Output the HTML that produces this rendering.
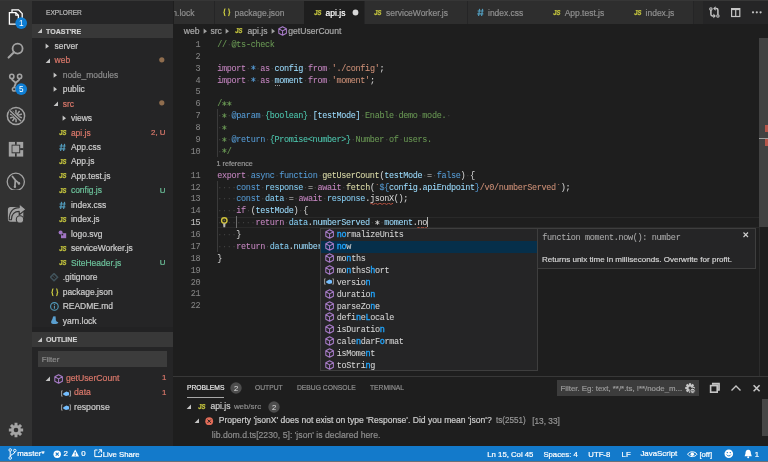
<!DOCTYPE html>
<html><head><meta charset="utf-8"><style>
html,body{margin:0;padding:0;background:#1e1e1e;overflow:hidden}
#root{position:relative;width:768px;height:462px;overflow:hidden;font-family:"Liberation Sans",sans-serif;will-change:transform}
#root>div{position:absolute;white-space:nowrap;-webkit-text-stroke:0.2px currentColor}
</style></head><body><div id="root">
<div style="left:0.00px;top:0.00px;width:768.00px;height:462.00px;background:#1e1e1e;"></div>
<div style="left:0.00px;top:0.00px;width:32.00px;height:446.00px;background:#323232;"></div>
<div style="left:32.00px;top:0.00px;width:141.20px;height:446.00px;background:#252526;"></div>
<div style="left:173.50px;top:0.00px;width:594.50px;height:24.20px;background:#252526;"></div>
<div style="left:0.00px;top:0.00px;width:768.00px;height:1.20px;background:#363636;"></div>
<div style="left:0.00px;top:445.70px;width:768.00px;height:15.00px;background:#137acb;"></div>
<div style="left:0.00px;top:460.60px;width:768.00px;height:1.40px;background:#6b7076;"></div>
<svg style="position:absolute;left:7.00px;top:8.00px;" width="20" height="20" viewBox="0 0 20 20"><path d="M2.4 4.7 L8.8 4.7 L11.4 7.3 L11.4 16.2 L2.4 16.2 Z" fill="none" stroke="#fff" stroke-width="1.3"/><path d="M5 4.7 V1.9 H11.6 L15.2 5.5 V13" fill="none" stroke="#fff" stroke-width="1.3"/><path d="M8.8 4.7 V7.3 H11.4" fill="none" stroke="#fff" stroke-width="1.1"/></svg>
<svg style="position:absolute;left:15.30px;top:16.80px;" width="13" height="13" viewBox="0 0 13 13"><circle cx="6.2" cy="6.1" r="5.9" fill="#0e7ed4"/><text x="6.2" y="9.0" text-anchor="middle" font-family="Liberation Sans" font-size="8.2" fill="#fff">1</text></svg>
<svg style="position:absolute;left:5.30px;top:38.60px;" width="20" height="22" viewBox="0 0 20 22"><circle cx="12.6" cy="9.6" r="5.0" fill="none" stroke="#a3a3a3" stroke-width="1.8"/><path d="M9 13.3 L3.6 18.6" stroke="#a3a3a3" stroke-width="2.1" stroke-linecap="round"/></svg>
<svg style="position:absolute;left:6.00px;top:70.00px;" width="20" height="24" viewBox="0 0 20 24"><circle cx="5.8" cy="6.4" r="2.1" fill="none" stroke="#a3a3a3" stroke-width="1.6"/><circle cx="13.6" cy="6.4" r="2.1" fill="none" stroke="#a3a3a3" stroke-width="1.6"/><path d="M5.8 8.5 C5.8 11.2 9.6 11.4 9.6 13.6 M13.6 8.5 C13.6 11.2 9.6 11.4 9.6 13.6 C9.6 15 8.4 15.6 8.4 17.2" fill="none" stroke="#a3a3a3" stroke-width="1.9"/><circle cx="8.2" cy="19.2" r="1.8" fill="none" stroke="#a3a3a3" stroke-width="1.5"/></svg>
<svg style="position:absolute;left:15.30px;top:82.80px;" width="13" height="13" viewBox="0 0 13 13"><circle cx="6.2" cy="6.1" r="5.9" fill="#0e7ed4"/><text x="6.2" y="9.0" text-anchor="middle" font-family="Liberation Sans" font-size="8.2" fill="#fff">5</text></svg>
<svg style="position:absolute;left:5.80px;top:106.10px;" width="20" height="20" viewBox="0 0 20 20"><circle cx="10" cy="10" r="8.6" fill="none" stroke="#a3a3a3" stroke-width="1.5"/><path d="M11.91 10.59 L15.92 11.83" stroke="#a3a3a3" stroke-width="1.5"/><path d="M11.20 11.60 L13.71 14.96" stroke="#a3a3a3" stroke-width="1.5"/><path d="M10.03 12.00 L10.09 16.20" stroke="#a3a3a3" stroke-width="1.5"/><path d="M8.85 11.63 L6.43 15.07" stroke="#a3a3a3" stroke-width="1.5"/><path d="M8.11 10.64 L4.13 12.00" stroke="#a3a3a3" stroke-width="1.5"/><path d="M8.09 9.41 L4.08 8.17" stroke="#a3a3a3" stroke-width="1.5"/><path d="M8.80 8.40 L6.29 5.04" stroke="#a3a3a3" stroke-width="1.5"/><path d="M9.97 8.00 L9.91 3.80" stroke="#a3a3a3" stroke-width="1.5"/><path d="M11.15 8.37 L13.57 4.93" stroke="#a3a3a3" stroke-width="1.5"/><path d="M11.89 9.36 L15.87 8.00" stroke="#a3a3a3" stroke-width="1.5"/><circle cx="10" cy="10.4" r="3" fill="#a3a3a3"/><path d="M3.8 4.4 L15.1 15.3" stroke="#323232" stroke-width="3"/><path d="M3.8 4.4 L15.1 15.3" stroke="#a3a3a3" stroke-width="1.4"/></svg>
<svg style="position:absolute;left:7.00px;top:140.00px;" width="18" height="18" viewBox="0 0 18 18"><rect x="1.8" y="1.9" width="14.4" height="14.7" fill="#a3a3a3"/><rect x="4.6" y="4.7" width="8.6" height="8.6" fill="#323232"/><rect x="5.45" y="5.6" width="6.75" height="6.7" fill="#a3a3a3"/><rect x="8" y="1.5" width="1.7" height="3.3" fill="#323232"/><rect x="8" y="13.2" width="1.7" height="3.6" fill="#323232"/><rect x="13.1" y="8.1" width="3.5" height="2" fill="#323232"/></svg>
<svg style="position:absolute;left:6.00px;top:170.00px;" width="20" height="20" viewBox="0 0 20 20"><circle cx="9.8" cy="11.8" r="8.6" fill="none" stroke="#a3a3a3" stroke-width="1.3"/><path d="M6.45 6.5 L9.3 10.1 L8.9 16.6 M9.4 10.3 L12.9 13.2" fill="none" stroke="#a3a3a3" stroke-width="1.7" stroke-linecap="round"/><circle cx="12.9" cy="13.4" r="1.3" fill="#a3a3a3"/><circle cx="8.9" cy="16.8" r="1.2" fill="#a3a3a3"/></svg>
<svg style="position:absolute;left:4.00px;top:198.00px;" width="26" height="28" viewBox="0 0 26 28"><rect x="3.9" y="9.1" width="15.4" height="14.6" rx="2.6" fill="#a3a3a3"/><path d="M7.4 21.8 C7.4 16 10.5 13.4 15.2 13.4 L15.2 16.8 L22 11.4 L15.2 5.8 L15.2 9.6 C9.2 9.6 5.2 13.6 5.2 21.8 Z" fill="#a3a3a3" stroke="#323232" stroke-width="1.1" stroke-linejoin="round"/><circle cx="16" cy="21.4" r="3.7" fill="#a3a3a3" stroke="#323232" stroke-width="1.1"/></svg>
<svg style="position:absolute;left:6.00px;top:419.50px;" width="20" height="20" viewBox="0 0 20 20"><path d="M17.15 8.55 L17.15 11.45 L14.78 11.48 L14.42 12.33 L16.08 14.03 L14.03 16.08 L12.33 14.42 L11.48 14.78 L11.45 17.15 L8.55 17.15 L8.52 14.78 L7.67 14.42 L5.97 16.08 L3.92 14.03 L5.58 12.33 L5.22 11.48 L2.85 11.45 L2.85 8.55 L5.22 8.52 L5.58 7.67 L3.92 5.97 L5.97 3.92 L7.67 5.58 L8.52 5.22 L8.55 2.85 L11.45 2.85 L11.48 5.22 L12.33 5.58 L14.03 3.92 L16.08 5.97 L14.42 7.67 L14.78 8.52Z" fill="#a3a3a3"/><circle cx="10" cy="10" r="2.3" fill="#323232"/></svg>
<div style="left:45.80px;top:7.93px;line-height:10.95px;font-family:'Liberation Sans', sans-serif;font-size:7.3px;color:#bbbbbb;font-weight:400;transform:scaleX(0.9);transform-origin:0 0">EXPLORER</div>
<div style="left:32.00px;top:23.70px;width:141.20px;height:14.60px;background:#383838;"></div>
<svg style="position:absolute;left:36.80px;top:28.40px;" width="6" height="6" viewBox="0 0 6 6"><path d="M5 0.6 L5 5 L0.6 5 Z" fill="#c5c5c5"/></svg>
<div style="left:45.80px;top:25.60px;line-height:11.40px;font-family:'Liberation Sans', sans-serif;font-size:7.6px;color:#d0d0d0;font-weight:700;transform:scaleX(0.925);transform-origin:0 0">TOAST&#x27;RE</div>
<svg style="position:absolute;left:45.30px;top:42.93px;" width="5" height="7" viewBox="0 0 5 7"><path d="M0.6 0.6 L4.0 3.2 L0.6 5.8 Z" fill="#c5c5c5"/></svg>
<div style="left:54.60px;top:39.77px;line-height:12.71px;font-family:'Liberation Sans', sans-serif;font-size:8.47px;color:#cccccc;font-weight:400;">server</div>
<svg style="position:absolute;left:44.60px;top:57.79px;" width="6" height="6" viewBox="0 0 6 6"><path d="M5 0.6 L5 5 L0.6 5 Z" fill="#c5c5c5"/></svg>
<div style="left:54.60px;top:54.23px;line-height:12.71px;font-family:'Liberation Sans', sans-serif;font-size:8.47px;color:#d8776a;font-weight:400;">web</div>
<svg style="position:absolute;left:158.50px;top:57.09px;" width="6" height="6" viewBox="0 0 6 6"><circle cx="2.8" cy="2.8" r="2.6" fill="#8f6d4e"/></svg>
<svg style="position:absolute;left:53.40px;top:71.85px;" width="5" height="7" viewBox="0 0 5 7"><path d="M0.6 0.6 L4.0 3.2 L0.6 5.8 Z" fill="#c5c5c5"/></svg>
<div style="left:62.70px;top:68.69px;line-height:12.71px;font-family:'Liberation Sans', sans-serif;font-size:8.47px;color:#8c8c8c;font-weight:400;">node_modules</div>
<svg style="position:absolute;left:53.40px;top:86.31px;" width="5" height="7" viewBox="0 0 5 7"><path d="M0.6 0.6 L4.0 3.2 L0.6 5.8 Z" fill="#c5c5c5"/></svg>
<div style="left:62.70px;top:83.16px;line-height:12.71px;font-family:'Liberation Sans', sans-serif;font-size:8.47px;color:#cccccc;font-weight:400;">public</div>
<svg style="position:absolute;left:52.70px;top:101.17px;" width="6" height="6" viewBox="0 0 6 6"><path d="M5 0.6 L5 5 L0.6 5 Z" fill="#c5c5c5"/></svg>
<div style="left:62.70px;top:97.62px;line-height:12.71px;font-family:'Liberation Sans', sans-serif;font-size:8.47px;color:#d8776a;font-weight:400;">src</div>
<svg style="position:absolute;left:158.50px;top:100.47px;" width="6" height="6" viewBox="0 0 6 6"><circle cx="2.8" cy="2.8" r="2.6" fill="#8f6d4e"/></svg>
<svg style="position:absolute;left:61.60px;top:115.23px;" width="5" height="7" viewBox="0 0 5 7"><path d="M0.6 0.6 L4.0 3.2 L0.6 5.8 Z" fill="#c5c5c5"/></svg>
<div style="left:70.90px;top:112.08px;line-height:12.71px;font-family:'Liberation Sans', sans-serif;font-size:8.47px;color:#cccccc;font-weight:400;">views</div>
<svg style="position:absolute;left:58.60px;top:128.89px;" width="9" height="8" viewBox="0 0 9 8"><text x="0.3" y="6.45" font-family="Liberation Sans" font-weight="700" font-style="italic" font-size="6.9" textLength="7.2" lengthAdjust="spacingAndGlyphs" fill="#c4c43e" stroke="#c4c43e" stroke-width="0.25">JS</text></svg>
<div style="left:70.90px;top:126.53px;line-height:12.71px;font-family:'Liberation Sans', sans-serif;font-size:8.47px;color:#d8776a;font-weight:400;">api.js</div>
<div style="right:602.5px;top:126.89px;line-height:12px;font-family:'Liberation Sans', sans-serif;font-size:7.9px;color:#d8776a">2, U</div>
<svg style="position:absolute;left:59.40px;top:143.15px;" width="8" height="9" viewBox="0 0 8 9"><path d="M2.6 0.8 L1.6 8 M5.6 0.8 L4.6 8 M0.6 3 H6.6 M0.3 5.8 H6.3" stroke="#519aba" stroke-width="1.2" fill="none"/></svg>
<div style="left:70.90px;top:141.00px;line-height:12.71px;font-family:'Liberation Sans', sans-serif;font-size:8.47px;color:#cccccc;font-weight:400;">App.css</div>
<svg style="position:absolute;left:58.60px;top:157.81px;" width="9" height="8" viewBox="0 0 9 8"><text x="0.3" y="6.45" font-family="Liberation Sans" font-weight="700" font-style="italic" font-size="6.9" textLength="7.2" lengthAdjust="spacingAndGlyphs" fill="#c4c43e" stroke="#c4c43e" stroke-width="0.25">JS</text></svg>
<div style="left:70.90px;top:155.46px;line-height:12.71px;font-family:'Liberation Sans', sans-serif;font-size:8.47px;color:#cccccc;font-weight:400;">App.js</div>
<svg style="position:absolute;left:58.60px;top:172.27px;" width="9" height="8" viewBox="0 0 9 8"><text x="0.3" y="6.45" font-family="Liberation Sans" font-weight="700" font-style="italic" font-size="6.9" textLength="7.2" lengthAdjust="spacingAndGlyphs" fill="#c4c43e" stroke="#c4c43e" stroke-width="0.25">JS</text></svg>
<div style="left:70.90px;top:169.92px;line-height:12.71px;font-family:'Liberation Sans', sans-serif;font-size:8.47px;color:#cccccc;font-weight:400;">App.test.js</div>
<svg style="position:absolute;left:58.60px;top:186.73px;" width="9" height="8" viewBox="0 0 9 8"><text x="0.3" y="6.45" font-family="Liberation Sans" font-weight="700" font-style="italic" font-size="6.9" textLength="7.2" lengthAdjust="spacingAndGlyphs" fill="#c4c43e" stroke="#c4c43e" stroke-width="0.25">JS</text></svg>
<div style="left:70.90px;top:184.38px;line-height:12.71px;font-family:'Liberation Sans', sans-serif;font-size:8.47px;color:#6cc09a;font-weight:400;">config.js</div>
<div style="right:602.5px;top:184.73px;line-height:12px;font-family:'Liberation Sans', sans-serif;font-size:7.9px;color:#6cc09a">U</div>
<svg style="position:absolute;left:59.40px;top:200.99px;" width="8" height="9" viewBox="0 0 8 9"><path d="M2.6 0.8 L1.6 8 M5.6 0.8 L4.6 8 M0.6 3 H6.6 M0.3 5.8 H6.3" stroke="#519aba" stroke-width="1.2" fill="none"/></svg>
<div style="left:70.90px;top:198.84px;line-height:12.71px;font-family:'Liberation Sans', sans-serif;font-size:8.47px;color:#cccccc;font-weight:400;">index.css</div>
<svg style="position:absolute;left:58.60px;top:215.65px;" width="9" height="8" viewBox="0 0 9 8"><text x="0.3" y="6.45" font-family="Liberation Sans" font-weight="700" font-style="italic" font-size="6.9" textLength="7.2" lengthAdjust="spacingAndGlyphs" fill="#c4c43e" stroke="#c4c43e" stroke-width="0.25">JS</text></svg>
<div style="left:70.90px;top:213.30px;line-height:12.71px;font-family:'Liberation Sans', sans-serif;font-size:8.47px;color:#cccccc;font-weight:400;">index.js</div>
<svg style="position:absolute;left:58.30px;top:229.81px;" width="9" height="9" viewBox="0 0 9 9"><circle cx="2.6" cy="2.6" r="2" fill="#a074c4"/><rect x="3" y="3.2" width="5.2" height="5" fill="#a074c4"/><rect x="3.6" y="3.8" width="1.6" height="1.6" fill="#252526"/></svg>
<div style="left:70.90px;top:227.76px;line-height:12.71px;font-family:'Liberation Sans', sans-serif;font-size:8.47px;color:#cccccc;font-weight:400;">logo.svg</div>
<svg style="position:absolute;left:58.60px;top:244.57px;" width="9" height="8" viewBox="0 0 9 8"><text x="0.3" y="6.45" font-family="Liberation Sans" font-weight="700" font-style="italic" font-size="6.9" textLength="7.2" lengthAdjust="spacingAndGlyphs" fill="#c4c43e" stroke="#c4c43e" stroke-width="0.25">JS</text></svg>
<div style="left:70.90px;top:242.22px;line-height:12.71px;font-family:'Liberation Sans', sans-serif;font-size:8.47px;color:#cccccc;font-weight:400;">serviceWorker.js</div>
<svg style="position:absolute;left:58.60px;top:259.03px;" width="9" height="8" viewBox="0 0 9 8"><text x="0.3" y="6.45" font-family="Liberation Sans" font-weight="700" font-style="italic" font-size="6.9" textLength="7.2" lengthAdjust="spacingAndGlyphs" fill="#c4c43e" stroke="#c4c43e" stroke-width="0.25">JS</text></svg>
<div style="left:70.90px;top:256.68px;line-height:12.71px;font-family:'Liberation Sans', sans-serif;font-size:8.47px;color:#6cc09a;font-weight:400;">SiteHeader.js</div>
<div style="right:602.5px;top:257.03px;line-height:12px;font-family:'Liberation Sans', sans-serif;font-size:7.9px;color:#6cc09a">U</div>
<svg style="position:absolute;left:50.40px;top:273.29px;" width="9" height="9" viewBox="0 0 9 9"><path d="M4 0.6 L7.6 4.2 L4 7.8 L0.4 4.2 Z" fill="none" stroke="#41535b" stroke-width="1.5"/><path d="M3 3.2 L4.5 4.7" stroke="#41535b" stroke-width="1"/></svg>
<div style="left:62.70px;top:271.13px;line-height:12.71px;font-family:'Liberation Sans', sans-serif;font-size:8.47px;color:#cccccc;font-weight:400;">.gitignore</div>
<svg style="position:absolute;left:50.50px;top:287.75px;" width="8" height="9" viewBox="0 0 8 9"><path d="M2.4 0.9 C1.2 0.9 1.5 2 1.4 3.2 C1.3 4 1 4.2 0.5 4.3 C1 4.4 1.3 4.6 1.4 5.4 C1.5 6.6 1.2 7.7 2.4 7.7 M5.2 0.9 C6.4 0.9 6.1 2 6.2 3.2 C6.3 4 6.6 4.2 7.1 4.3 C6.6 4.4 6.3 4.6 6.2 5.4 C6.1 6.6 6.4 7.7 5.2 7.7" fill="none" stroke="#cbcb41" stroke-width="1.2"/></svg>
<div style="left:62.70px;top:285.60px;line-height:12.71px;font-family:'Liberation Sans', sans-serif;font-size:8.47px;color:#cccccc;font-weight:400;">package.json</div>
<svg style="position:absolute;left:50.00px;top:302.01px;" width="9" height="9" viewBox="0 0 9 9"><circle cx="4.4" cy="4.4" r="3.8" fill="none" stroke="#519aba" stroke-width="1.1"/><rect x="3.9" y="3.8" width="1.1" height="2.9" fill="#519aba"/><rect x="3.9" y="2.1" width="1.1" height="1" fill="#519aba"/></svg>
<div style="left:62.70px;top:300.06px;line-height:12.71px;font-family:'Liberation Sans', sans-serif;font-size:8.47px;color:#cccccc;font-weight:400;">README.md</div>
<svg style="position:absolute;left:50.00px;top:315.37px;" width="10" height="10" viewBox="0 0 10 10"><path d="M3.2 1.8 L3.9 0.9 L4.6 1.6 L5.3 0.9 L5.6 2.2 C6 3.2 5.6 4.6 6 5.6 C6.4 6.6 7.6 7 8.4 7.4 C7.8 8.6 6.2 9 4.6 9 C2.6 9 1.2 8.6 1.1 7.4 C1 6 2.2 5 2.5 3.8 C2.7 2.9 2.8 2.3 3.2 1.8Z" fill="#5a9fcf"/></svg>
<div style="left:62.70px;top:314.51px;line-height:12.71px;font-family:'Liberation Sans', sans-serif;font-size:8.47px;color:#cccccc;font-weight:400;">yarn.lock</div>
<div style="left:32.00px;top:326.80px;width:141.20px;height:5.20px;background:#222223;"></div>
<div style="left:32.00px;top:332.00px;width:141.20px;height:14.80px;background:#383838;"></div>
<svg style="position:absolute;left:36.80px;top:336.60px;" width="6" height="6" viewBox="0 0 6 6"><path d="M5 0.6 L5 5 L0.6 5 Z" fill="#c5c5c5"/></svg>
<div style="left:45.50px;top:334.23px;line-height:11.55px;font-family:'Liberation Sans', sans-serif;font-size:7.7px;color:#d0d0d0;font-weight:700;transform:scaleX(0.925);transform-origin:0 0">OUTLINE</div>
<div style="left:38.30px;top:351.00px;width:128.90px;height:16.20px;background:#3c3c3c;"></div>
<div style="left:41.80px;top:354.07px;line-height:11.85px;font-family:'Liberation Sans', sans-serif;font-size:7.9px;color:#8d8d8d;font-weight:400;">Filter</div>
<svg style="position:absolute;left:45.20px;top:375.60px;" width="6" height="6" viewBox="0 0 6 6"><path d="M5 0.6 L5 5 L0.6 5 Z" fill="#c5c5c5"/></svg>
<svg style="position:absolute;left:53.60px;top:373.60px;" width="9.2" height="10" viewBox="0 0 9.2 10"><path d="M4.6 0.7 L8.4 2.8 L8.4 7.2 L4.6 9.3 L0.8 7.2 L0.8 2.8 Z M0.8 2.8 L4.6 4.9 L8.4 2.8 M4.6 4.9 L4.6 9.3" fill="none" stroke="#a87cc9" stroke-width="1.05" stroke-linejoin="round"/></svg>
<div style="left:65.90px;top:371.98px;line-height:13.05px;font-family:'Liberation Sans', sans-serif;font-size:8.7px;color:#d8776a;font-weight:400;">getUserCount</div>
<div style="left:162.00px;top:372.07px;line-height:11.85px;font-family:'Liberation Sans', sans-serif;font-size:7.9px;color:#d8776a;font-weight:400;">1</div>
<svg style="position:absolute;left:61.00px;top:389.50px;" width="10" height="7" viewBox="0 0 10 7"><path d="M1.6 0.8 H0.6 V6.2 H1.6 M8.4 0.8 H9.4 V6.2 H8.4" fill="none" stroke="#b8b8b8" stroke-width="0.8"/><path d="M2.3 3.2 L5.5 1.5 L8 2.6 L8 5.2 L5 6 L2.3 4.8 Z" fill="#75beff"/></svg>
<div style="left:74.00px;top:386.48px;line-height:13.05px;font-family:'Liberation Sans', sans-serif;font-size:8.7px;color:#d8776a;font-weight:400;">data</div>
<div style="left:162.00px;top:386.57px;line-height:11.85px;font-family:'Liberation Sans', sans-serif;font-size:7.9px;color:#d8776a;font-weight:400;">1</div>
<svg style="position:absolute;left:61.00px;top:404.20px;" width="10" height="7" viewBox="0 0 10 7"><path d="M1.6 0.8 H0.6 V6.2 H1.6 M8.4 0.8 H9.4 V6.2 H8.4" fill="none" stroke="#b8b8b8" stroke-width="0.8"/><path d="M2.3 3.2 L5.5 1.5 L8 2.6 L8 5.2 L5 6 L2.3 4.8 Z" fill="#75beff"/></svg>
<div style="left:74.00px;top:401.18px;line-height:13.05px;font-family:'Liberation Sans', sans-serif;font-size:8.7px;color:#cccccc;font-weight:400;">response</div>
<div style="left:173.50px;top:1.20px;width:40.50px;height:23.00px;background:#2e2e2e;"></div>
<div style="left:173.5px;top:6.5px;width:21px;height:13px;overflow:hidden"><div style="position:absolute;right:0;top:0.4px;line-height:12.7px;font-family:'Liberation Sans', sans-serif;font-size:8.47px;color:#8f8f8f;white-space:nowrap">yarn.lock</div></div>
<div style="left:214.50px;top:1.20px;width:89.80px;height:23.00px;background:#2e2e2e;"></div>
<svg style="position:absolute;left:222.60px;top:8.20px;" width="8" height="9" viewBox="0 0 8 9"><path d="M2.4 0.9 C1.2 0.9 1.5 2 1.4 3.2 C1.3 4 1 4.2 0.5 4.3 C1 4.4 1.3 4.6 1.4 5.4 C1.5 6.6 1.2 7.7 2.4 7.7 M5.2 0.9 C6.4 0.9 6.1 2 6.2 3.2 C6.3 4 6.6 4.2 7.1 4.3 C6.6 4.4 6.3 4.6 6.2 5.4 C6.1 6.6 6.4 7.7 5.2 7.7" fill="none" stroke="#cbcb41" stroke-width="1.2"/></svg>
<div style="left:234.60px;top:6.64px;line-height:12.71px;font-family:'Liberation Sans', sans-serif;font-size:8.47px;color:#8f8f8f;font-weight:400;">package.json</div>
<div style="left:304.30px;top:1.20px;width:59.70px;height:23.00px;background:#1e1e1e;"></div>
<svg style="position:absolute;left:313.90px;top:8.70px;" width="9" height="8" viewBox="0 0 9 8"><text x="0.3" y="6.45" font-family="Liberation Sans" font-weight="700" font-style="italic" font-size="6.9" textLength="7.2" lengthAdjust="spacingAndGlyphs" fill="#c4c43e" stroke="#c4c43e" stroke-width="0.25">JS</text></svg>
<div style="left:325.60px;top:6.64px;line-height:12.71px;font-family:'Liberation Sans', sans-serif;font-size:8.47px;color:#ffffff;font-weight:400;">api.js</div>
<svg style="position:absolute;left:351.50px;top:9.00px;" width="7" height="7" viewBox="0 0 7 7"><circle cx="3.5" cy="3.5" r="2.9" fill="#d8d8d8"/></svg>
<div style="left:364.60px;top:1.20px;width:102.40px;height:23.00px;background:#2e2e2e;"></div>
<svg style="position:absolute;left:373.70px;top:8.70px;" width="9" height="8" viewBox="0 0 9 8"><text x="0.3" y="6.45" font-family="Liberation Sans" font-weight="700" font-style="italic" font-size="6.9" textLength="7.2" lengthAdjust="spacingAndGlyphs" fill="#c4c43e" stroke="#c4c43e" stroke-width="0.25">JS</text></svg>
<div style="left:386.00px;top:6.64px;line-height:12.71px;font-family:'Liberation Sans', sans-serif;font-size:8.47px;color:#8f8f8f;font-weight:400;">serviceWorker.js</div>
<div style="left:467.50px;top:1.20px;width:76.00px;height:23.00px;background:#2e2e2e;"></div>
<svg style="position:absolute;left:477.00px;top:8.30px;" width="8" height="9" viewBox="0 0 8 9"><path d="M2.6 0.8 L1.6 8 M5.6 0.8 L4.6 8 M0.6 3 H6.6 M0.3 5.8 H6.3" stroke="#519aba" stroke-width="1.2" fill="none"/></svg>
<div style="left:488.00px;top:6.64px;line-height:12.71px;font-family:'Liberation Sans', sans-serif;font-size:8.47px;color:#8f8f8f;font-weight:400;">index.css</div>
<div style="left:544.20px;top:1.20px;width:79.50px;height:23.00px;background:#2e2e2e;"></div>
<svg style="position:absolute;left:552.70px;top:8.70px;" width="9" height="8" viewBox="0 0 9 8"><text x="0.3" y="6.45" font-family="Liberation Sans" font-weight="700" font-style="italic" font-size="6.9" textLength="7.2" lengthAdjust="spacingAndGlyphs" fill="#c4c43e" stroke="#c4c43e" stroke-width="0.25">JS</text></svg>
<div style="left:564.70px;top:6.64px;line-height:12.71px;font-family:'Liberation Sans', sans-serif;font-size:8.47px;color:#8f8f8f;font-weight:400;">App.test.js</div>
<div style="left:624.30px;top:1.20px;width:68.80px;height:23.00px;background:#2e2e2e;"></div>
<svg style="position:absolute;left:633.70px;top:8.70px;" width="9" height="8" viewBox="0 0 9 8"><text x="0.3" y="6.45" font-family="Liberation Sans" font-weight="700" font-style="italic" font-size="6.9" textLength="7.2" lengthAdjust="spacingAndGlyphs" fill="#c4c43e" stroke="#c4c43e" stroke-width="0.25">JS</text></svg>
<div style="left:645.60px;top:6.64px;line-height:12.71px;font-family:'Liberation Sans', sans-serif;font-size:8.47px;color:#8f8f8f;font-weight:400;">index.js</div>
<div style="left:693.50px;top:1.20px;width:9.50px;height:23.00px;background:#2a2a2a;"></div>
<svg style="position:absolute;left:706.00px;top:5.00px;" width="16" height="16" viewBox="0 0 16 16"><circle cx="4.9" cy="3.9" r="1.2" fill="none" stroke="#c5c5c5" stroke-width="1.1"/><path d="M4.9 5.1 V9.3 Q4.9 10.9 6.5 10.9 L7.6 10.9" fill="none" stroke="#c5c5c5" stroke-width="1.5"/><path d="M7.4 8.6 L9.9 10.9 L7.4 13.2 Z" fill="#c5c5c5"/><path d="M9.6 1.2 L7.1 3.5 L9.6 5.8 Z" fill="#c5c5c5"/><path d="M9.4 3.5 L10.4 3.5 Q11.9 3.5 11.9 5.1 V9.8" fill="none" stroke="#c5c5c5" stroke-width="1.5"/><circle cx="11.9" cy="11" r="1.2" fill="none" stroke="#c5c5c5" stroke-width="1.1"/></svg>
<svg style="position:absolute;left:729.00px;top:6.00px;" width="14" height="14" viewBox="0 0 14 14"><rect x="2.6" y="2.6" width="8.2" height="7.9" fill="none" stroke="#c5c5c5" stroke-width="1.2"/><rect x="2.6" y="2.6" width="8.2" height="1.5" fill="#c5c5c5"/><rect x="6.1" y="2.6" width="1.2" height="7.9" fill="#c5c5c5"/></svg>
<svg style="position:absolute;left:750.00px;top:9.00px;" width="14" height="7" viewBox="0 0 14 7"><circle cx="3" cy="3.3" r="1.1" fill="#c5c5c5"/><circle cx="6.8" cy="3.3" r="1.1" fill="#c5c5c5"/><circle cx="10.6" cy="3.3" r="1.1" fill="#c5c5c5"/></svg>
<div style="left:183.80px;top:25.15px;line-height:12.90px;font-family:'Liberation Sans', sans-serif;font-size:8.6px;color:#a9a9a9;font-weight:400;">web</div>
<svg style="position:absolute;left:203.00px;top:28.20px;" width="5" height="7" viewBox="0 0 5 7"><path d="M0.6 0.6 L4.0 3.2 L0.6 5.8 Z" fill="#a0a0a0"/></svg>
<div style="left:210.40px;top:25.15px;line-height:12.90px;font-family:'Liberation Sans', sans-serif;font-size:8.6px;color:#a9a9a9;font-weight:400;">src</div>
<svg style="position:absolute;left:225.30px;top:28.20px;" width="5" height="7" viewBox="0 0 5 7"><path d="M0.6 0.6 L4.0 3.2 L0.6 5.8 Z" fill="#a0a0a0"/></svg>
<svg style="position:absolute;left:235.30px;top:27.00px;" width="9" height="8" viewBox="0 0 9 8"><text x="0.3" y="6.45" font-family="Liberation Sans" font-weight="700" font-style="italic" font-size="6.9" textLength="7.2" lengthAdjust="spacingAndGlyphs" fill="#c4c43e" stroke="#c4c43e" stroke-width="0.25">JS</text></svg>
<div style="left:247.50px;top:25.15px;line-height:12.90px;font-family:'Liberation Sans', sans-serif;font-size:8.6px;color:#a9a9a9;font-weight:400;">api.js</div>
<svg style="position:absolute;left:270.50px;top:28.20px;" width="5" height="7" viewBox="0 0 5 7"><path d="M0.6 0.6 L4.0 3.2 L0.6 5.8 Z" fill="#a0a0a0"/></svg>
<svg style="position:absolute;left:277.60px;top:25.80px;" width="9.2" height="10" viewBox="0 0 9.2 10"><path d="M4.6 0.7 L8.4 2.8 L8.4 7.2 L4.6 9.3 L0.8 7.2 L0.8 2.8 Z M0.8 2.8 L4.6 4.9 L8.4 2.8 M4.6 4.9 L4.6 9.3" fill="none" stroke="#a87cc9" stroke-width="1.05" stroke-linejoin="round"/></svg>
<div style="left:288.30px;top:25.15px;line-height:12.90px;font-family:'Liberation Sans', sans-serif;font-size:8.6px;color:#a9a9a9;font-weight:400;">getUserCount</div>
<div style="left:217.25px;top:216.90px;width:541.50px;height:0.90px;background:#292929;"></div>
<div style="left:217.25px;top:226.80px;width:541.50px;height:0.90px;background:#292929;"></div>
<div style="left:217.25px;top:109.24px;width:0.90px;height:11.88px;background:#3a3a3a;"></div>
<div style="left:217.25px;top:121.12px;width:0.90px;height:11.88px;background:#3a3a3a;"></div>
<div style="left:217.25px;top:133.00px;width:0.90px;height:11.88px;background:#3a3a3a;"></div>
<div style="left:217.25px;top:144.88px;width:0.90px;height:11.88px;background:#3a3a3a;"></div>
<div style="left:217.25px;top:180.52px;width:0.90px;height:11.88px;background:#3a3a3a;"></div>
<div style="left:217.25px;top:192.40px;width:0.90px;height:11.88px;background:#3a3a3a;"></div>
<div style="left:217.25px;top:204.28px;width:0.90px;height:11.88px;background:#3a3a3a;"></div>
<div style="left:217.25px;top:216.16px;width:0.90px;height:11.88px;background:#3a3a3a;"></div>
<div style="left:217.25px;top:228.04px;width:0.90px;height:11.88px;background:#3a3a3a;"></div>
<div style="left:217.25px;top:239.92px;width:0.90px;height:11.88px;background:#3a3a3a;"></div>
<div style="left:236.01px;top:216.16px;width:0.90px;height:11.88px;background:#6e6e6e;"></div>
<div style="left:170px;width:30.23px;text-align:right;top:39.96px;line-height:11.88px;font-family:'Liberation Mono', monospace;font-size:8.5px;letter-spacing:-0.335px;-webkit-text-stroke:0.05px currentColor;color:#858585">1</div>
<div style="left:217.25px;top:39.96px;line-height:11.88px;font-family:'Liberation Mono', monospace;font-size:8.5px;letter-spacing:-0.335px;-webkit-text-stroke:0.05px currentColor;white-space:pre"><span style="color:#6a9955">//</span><span style="color:#424242">·</span><span style="color:#6a9955">@ts-check</span></div>
<div style="left:170px;width:30.23px;text-align:right;top:51.84px;line-height:11.88px;font-family:'Liberation Mono', monospace;font-size:8.5px;letter-spacing:-0.335px;-webkit-text-stroke:0.05px currentColor;color:#858585">2</div>
<div style="left:170px;width:30.23px;text-align:right;top:63.72px;line-height:11.88px;font-family:'Liberation Mono', monospace;font-size:8.5px;letter-spacing:-0.335px;-webkit-text-stroke:0.05px currentColor;color:#858585">3</div>
<div style="left:217.25px;top:63.72px;line-height:11.88px;font-family:'Liberation Mono', monospace;font-size:8.5px;letter-spacing:-0.335px;-webkit-text-stroke:0.05px currentColor;white-space:pre"><span style="color:#c586c0">import</span><span style="color:#424242">·</span><span style="display:inline-block;width:4.765px;height:11.88px;vertical-align:top;position:relative"><svg style="position:absolute;left:0;top:1.54px" width="5" height="5.2" viewBox="0 0 5 5.2"><path d="M2.4 0.3 V4.9 M0.4 1.45 L4.4 3.75 M0.4 3.75 L4.4 1.45" stroke="#569cd6" stroke-width="0.9"/></svg></span><span style="color:#424242">·</span><span style="color:#c586c0">as</span><span style="color:#424242">·</span><span style="color:#9cdcfe">config</span><span style="color:#424242">·</span><span style="color:#c586c0">from</span><span style="color:#424242">·</span><span style="color:#ce9178">&#x27;./config&#x27;</span><span style="color:#d4d4d4">;</span></div>
<div style="left:170px;width:30.23px;text-align:right;top:75.60px;line-height:11.88px;font-family:'Liberation Mono', monospace;font-size:8.5px;letter-spacing:-0.335px;-webkit-text-stroke:0.05px currentColor;color:#858585">4</div>
<div style="left:217.25px;top:75.60px;line-height:11.88px;font-family:'Liberation Mono', monospace;font-size:8.5px;letter-spacing:-0.335px;-webkit-text-stroke:0.05px currentColor;white-space:pre"><span style="color:#c586c0">import</span><span style="color:#424242">·</span><span style="display:inline-block;width:4.765px;height:11.88px;vertical-align:top;position:relative"><svg style="position:absolute;left:0;top:1.54px" width="5" height="5.2" viewBox="0 0 5 5.2"><path d="M2.4 0.3 V4.9 M0.4 1.45 L4.4 3.75 M0.4 3.75 L4.4 1.45" stroke="#569cd6" stroke-width="0.9"/></svg></span><span style="color:#424242">·</span><span style="color:#c586c0">as</span><span style="color:#424242">·</span><span style="color:#9cdcfe">moment</span><span style="color:#424242">·</span><span style="color:#c586c0">from</span><span style="color:#424242">·</span><span style="color:#ce9178">&#x27;moment&#x27;</span><span style="color:#d4d4d4">;</span></div>
<div style="left:170px;width:30.23px;text-align:right;top:87.48px;line-height:11.88px;font-family:'Liberation Mono', monospace;font-size:8.5px;letter-spacing:-0.335px;-webkit-text-stroke:0.05px currentColor;color:#858585">5</div>
<div style="left:170px;width:30.23px;text-align:right;top:99.36px;line-height:11.88px;font-family:'Liberation Mono', monospace;font-size:8.5px;letter-spacing:-0.335px;-webkit-text-stroke:0.05px currentColor;color:#858585">6</div>
<div style="left:217.25px;top:99.36px;line-height:11.88px;font-family:'Liberation Mono', monospace;font-size:8.5px;letter-spacing:-0.335px;-webkit-text-stroke:0.05px currentColor;white-space:pre"><span style="color:#6a9955">/</span><span style="display:inline-block;width:4.765px;height:11.88px;vertical-align:top;position:relative"><svg style="position:absolute;left:0;top:1.54px" width="5" height="5.2" viewBox="0 0 5 5.2"><path d="M2.4 0.3 V4.9 M0.4 1.45 L4.4 3.75 M0.4 3.75 L4.4 1.45" stroke="#6a9955" stroke-width="0.9"/></svg></span><span style="display:inline-block;width:4.765px;height:11.88px;vertical-align:top;position:relative"><svg style="position:absolute;left:0;top:1.54px" width="5" height="5.2" viewBox="0 0 5 5.2"><path d="M2.4 0.3 V4.9 M0.4 1.45 L4.4 3.75 M0.4 3.75 L4.4 1.45" stroke="#6a9955" stroke-width="0.9"/></svg></span></div>
<div style="left:170px;width:30.23px;text-align:right;top:111.24px;line-height:11.88px;font-family:'Liberation Mono', monospace;font-size:8.5px;letter-spacing:-0.335px;-webkit-text-stroke:0.05px currentColor;color:#858585">7</div>
<div style="left:217.25px;top:111.24px;line-height:11.88px;font-family:'Liberation Mono', monospace;font-size:8.5px;letter-spacing:-0.335px;-webkit-text-stroke:0.05px currentColor;white-space:pre"><span style="color:#424242">·</span><span style="display:inline-block;width:4.765px;height:11.88px;vertical-align:top;position:relative"><svg style="position:absolute;left:0;top:1.54px" width="5" height="5.2" viewBox="0 0 5 5.2"><path d="M2.4 0.3 V4.9 M0.4 1.45 L4.4 3.75 M0.4 3.75 L4.4 1.45" stroke="#6a9955" stroke-width="0.9"/></svg></span><span style="color:#424242">·</span><span style="color:#569cd6">@param</span><span style="color:#424242">·</span><span style="color:#4ec9b0">{boolean}</span><span style="color:#424242">·</span><span style="color:#9cdcfe">[testMode]</span><span style="color:#424242">·</span><span style="color:#6a9955">Enable</span><span style="color:#424242">·</span><span style="color:#6a9955">demo</span><span style="color:#424242">·</span><span style="color:#6a9955">mode.</span><span style="color:#424242">·</span></div>
<div style="left:170px;width:30.23px;text-align:right;top:123.12px;line-height:11.88px;font-family:'Liberation Mono', monospace;font-size:8.5px;letter-spacing:-0.335px;-webkit-text-stroke:0.05px currentColor;color:#858585">8</div>
<div style="left:217.25px;top:123.12px;line-height:11.88px;font-family:'Liberation Mono', monospace;font-size:8.5px;letter-spacing:-0.335px;-webkit-text-stroke:0.05px currentColor;white-space:pre"><span style="color:#424242">·</span><span style="display:inline-block;width:4.765px;height:11.88px;vertical-align:top;position:relative"><svg style="position:absolute;left:0;top:1.54px" width="5" height="5.2" viewBox="0 0 5 5.2"><path d="M2.4 0.3 V4.9 M0.4 1.45 L4.4 3.75 M0.4 3.75 L4.4 1.45" stroke="#6a9955" stroke-width="0.9"/></svg></span></div>
<div style="left:170px;width:30.23px;text-align:right;top:135.00px;line-height:11.88px;font-family:'Liberation Mono', monospace;font-size:8.5px;letter-spacing:-0.335px;-webkit-text-stroke:0.05px currentColor;color:#858585">9</div>
<div style="left:217.25px;top:135.00px;line-height:11.88px;font-family:'Liberation Mono', monospace;font-size:8.5px;letter-spacing:-0.335px;-webkit-text-stroke:0.05px currentColor;white-space:pre"><span style="color:#424242">·</span><span style="display:inline-block;width:4.765px;height:11.88px;vertical-align:top;position:relative"><svg style="position:absolute;left:0;top:1.54px" width="5" height="5.2" viewBox="0 0 5 5.2"><path d="M2.4 0.3 V4.9 M0.4 1.45 L4.4 3.75 M0.4 3.75 L4.4 1.45" stroke="#6a9955" stroke-width="0.9"/></svg></span><span style="color:#424242">·</span><span style="color:#569cd6">@return</span><span style="color:#424242">·</span><span style="color:#4ec9b0">{Promise&lt;number&gt;}</span><span style="color:#424242">·</span><span style="color:#6a9955">Number</span><span style="color:#424242">·</span><span style="color:#6a9955">of</span><span style="color:#424242">·</span><span style="color:#6a9955">users.</span></div>
<div style="left:170px;width:30.23px;text-align:right;top:146.88px;line-height:11.88px;font-family:'Liberation Mono', monospace;font-size:8.5px;letter-spacing:-0.335px;-webkit-text-stroke:0.05px currentColor;color:#858585">10</div>
<div style="left:217.25px;top:146.88px;line-height:11.88px;font-family:'Liberation Mono', monospace;font-size:8.5px;letter-spacing:-0.335px;-webkit-text-stroke:0.05px currentColor;white-space:pre"><span style="color:#424242">·</span><span style="display:inline-block;width:4.765px;height:11.88px;vertical-align:top;position:relative"><svg style="position:absolute;left:0;top:1.54px" width="5" height="5.2" viewBox="0 0 5 5.2"><path d="M2.4 0.3 V4.9 M0.4 1.45 L4.4 3.75 M0.4 3.75 L4.4 1.45" stroke="#6a9955" stroke-width="0.9"/></svg></span><span style="color:#6a9955">/</span></div>
<div style="left:170px;width:30.23px;text-align:right;top:170.64px;line-height:11.88px;font-family:'Liberation Mono', monospace;font-size:8.5px;letter-spacing:-0.335px;-webkit-text-stroke:0.05px currentColor;color:#858585">11</div>
<div style="left:217.25px;top:170.64px;line-height:11.88px;font-family:'Liberation Mono', monospace;font-size:8.5px;letter-spacing:-0.335px;-webkit-text-stroke:0.05px currentColor;white-space:pre"><span style="color:#c586c0">export</span><span style="color:#424242">·</span><span style="color:#569cd6">async</span><span style="color:#424242">·</span><span style="color:#569cd6">function</span><span style="color:#424242">·</span><span style="color:#dcdcaa">getUserCount</span><span style="color:#d4d4d4">(</span><span style="color:#9cdcfe">testMode</span><span style="color:#424242">·</span><span style="color:#d4d4d4">=</span><span style="color:#424242">·</span><span style="color:#569cd6">false</span><span style="color:#d4d4d4">)</span><span style="color:#424242">·</span><span style="color:#d4d4d4">{</span></div>
<div style="left:170px;width:30.23px;text-align:right;top:182.52px;line-height:11.88px;font-family:'Liberation Mono', monospace;font-size:8.5px;letter-spacing:-0.335px;-webkit-text-stroke:0.05px currentColor;color:#858585">12</div>
<div style="left:217.25px;top:182.52px;line-height:11.88px;font-family:'Liberation Mono', monospace;font-size:8.5px;letter-spacing:-0.335px;-webkit-text-stroke:0.05px currentColor;white-space:pre"><span style="color:#424242">····</span><span style="color:#569cd6">const</span><span style="color:#424242">·</span><span style="color:#86cdf2">response</span><span style="color:#424242">·</span><span style="color:#d4d4d4">=</span><span style="color:#424242">·</span><span style="color:#c586c0">await</span><span style="color:#424242">·</span><span style="color:#dcdcaa">fetch</span><span style="color:#d4d4d4">(</span><span style="color:#ce9178">`</span><span style="color:#569cd6">${</span><span style="color:#9cdcfe">config</span><span style="color:#d4d4d4">.</span><span style="color:#9cdcfe">apiEndpoint</span><span style="color:#569cd6">}</span><span style="color:#ce9178">/v0/numberServed`</span><span style="color:#d4d4d4">)</span><span style="color:#d4d4d4">;</span></div>
<div style="left:170px;width:30.23px;text-align:right;top:194.40px;line-height:11.88px;font-family:'Liberation Mono', monospace;font-size:8.5px;letter-spacing:-0.335px;-webkit-text-stroke:0.05px currentColor;color:#858585">13</div>
<div style="left:217.25px;top:194.40px;line-height:11.88px;font-family:'Liberation Mono', monospace;font-size:8.5px;letter-spacing:-0.335px;-webkit-text-stroke:0.05px currentColor;white-space:pre"><span style="color:#424242">····</span><span style="color:#569cd6">const</span><span style="color:#424242">·</span><span style="color:#86cdf2">data</span><span style="color:#424242">·</span><span style="color:#d4d4d4">=</span><span style="color:#424242">·</span><span style="color:#c586c0">await</span><span style="color:#424242">·</span><span style="color:#86cdf2">response</span><span style="color:#d4d4d4">.</span><span style="color:#d4d4d4">jsonX</span><span style="color:#d4d4d4">()</span><span style="color:#d4d4d4">;</span></div>
<div style="left:170px;width:30.23px;text-align:right;top:206.28px;line-height:11.88px;font-family:'Liberation Mono', monospace;font-size:8.5px;letter-spacing:-0.335px;-webkit-text-stroke:0.05px currentColor;color:#858585">14</div>
<div style="left:217.25px;top:206.28px;line-height:11.88px;font-family:'Liberation Mono', monospace;font-size:8.5px;letter-spacing:-0.335px;-webkit-text-stroke:0.05px currentColor;white-space:pre"><span style="color:#424242">····</span><span style="color:#c586c0">if</span><span style="color:#424242">·</span><span style="color:#d4d4d4">(</span><span style="color:#9cdcfe">testMode</span><span style="color:#d4d4d4">)</span><span style="color:#424242">·</span><span style="color:#d4d4d4">{</span></div>
<div style="left:170px;width:30.23px;text-align:right;top:218.16px;line-height:11.88px;font-family:'Liberation Mono', monospace;font-size:8.5px;letter-spacing:-0.335px;-webkit-text-stroke:0.05px currentColor;color:#c6c6c6">15</div>
<div style="left:217.25px;top:218.16px;line-height:11.88px;font-family:'Liberation Mono', monospace;font-size:8.5px;letter-spacing:-0.335px;-webkit-text-stroke:0.05px currentColor;white-space:pre"><span style="color:#424242">········</span><span style="color:#c586c0">return</span><span style="color:#424242">·</span><span style="color:#86cdf2">data</span><span style="color:#d4d4d4">.</span><span style="color:#9cdcfe">numberServed</span><span style="color:#424242">·</span><span style="display:inline-block;width:4.765px;height:11.88px;vertical-align:top;position:relative"><svg style="position:absolute;left:0;top:1.54px" width="5" height="5.2" viewBox="0 0 5 5.2"><path d="M2.4 0.3 V4.9 M0.4 1.45 L4.4 3.75 M0.4 3.75 L4.4 1.45" stroke="#d4d4d4" stroke-width="0.9"/></svg></span><span style="color:#424242">·</span><span style="color:#9cdcfe">moment</span><span style="color:#d4d4d4">.</span><span style="color:#d4d4d4">no</span></div>
<div style="left:170px;width:30.23px;text-align:right;top:230.04px;line-height:11.88px;font-family:'Liberation Mono', monospace;font-size:8.5px;letter-spacing:-0.335px;-webkit-text-stroke:0.05px currentColor;color:#858585">16</div>
<div style="left:217.25px;top:230.04px;line-height:11.88px;font-family:'Liberation Mono', monospace;font-size:8.5px;letter-spacing:-0.335px;-webkit-text-stroke:0.05px currentColor;white-space:pre"><span style="color:#424242">····</span><span style="color:#d4d4d4">}</span></div>
<div style="left:170px;width:30.23px;text-align:right;top:241.92px;line-height:11.88px;font-family:'Liberation Mono', monospace;font-size:8.5px;letter-spacing:-0.335px;-webkit-text-stroke:0.05px currentColor;color:#858585">17</div>
<div style="left:217.25px;top:241.92px;line-height:11.88px;font-family:'Liberation Mono', monospace;font-size:8.5px;letter-spacing:-0.335px;-webkit-text-stroke:0.05px currentColor;white-space:pre"><span style="color:#424242">····</span><span style="color:#c586c0">return</span><span style="color:#424242">·</span><span style="color:#86cdf2">data</span><span style="color:#d4d4d4">.</span><span style="color:#9cdcfe">numberServed</span><span style="color:#d4d4d4">;</span></div>
<div style="left:170px;width:30.23px;text-align:right;top:253.80px;line-height:11.88px;font-family:'Liberation Mono', monospace;font-size:8.5px;letter-spacing:-0.335px;-webkit-text-stroke:0.05px currentColor;color:#858585">18</div>
<div style="left:217.25px;top:253.80px;line-height:11.88px;font-family:'Liberation Mono', monospace;font-size:8.5px;letter-spacing:-0.335px;-webkit-text-stroke:0.05px currentColor;white-space:pre"><span style="color:#d4d4d4">}</span></div>
<div style="left:170px;width:30.23px;text-align:right;top:265.68px;line-height:11.88px;font-family:'Liberation Mono', monospace;font-size:8.5px;letter-spacing:-0.335px;-webkit-text-stroke:0.05px currentColor;color:#858585">19</div>
<div style="left:170px;width:30.23px;text-align:right;top:277.56px;line-height:11.88px;font-family:'Liberation Mono', monospace;font-size:8.5px;letter-spacing:-0.335px;-webkit-text-stroke:0.05px currentColor;color:#858585">20</div>
<div style="left:170px;width:30.23px;text-align:right;top:289.44px;line-height:11.88px;font-family:'Liberation Mono', monospace;font-size:8.5px;letter-spacing:-0.335px;-webkit-text-stroke:0.05px currentColor;color:#858585">21</div>
<div style="left:170px;width:30.23px;text-align:right;top:301.32px;line-height:11.88px;font-family:'Liberation Mono', monospace;font-size:8.5px;letter-spacing:-0.335px;-webkit-text-stroke:0.05px currentColor;color:#858585">22</div>
<div style="left:216.60px;top:158.63px;line-height:10.73px;font-family:'Liberation Sans', sans-serif;font-size:7.15px;color:#999999;font-weight:400;">1 reference</div>
<svg style="position:absolute;left:369.73px;top:202.94px;" width="23.825" height="2" viewBox="0 0 23.825 2"><path d="M0 1.4 L1.10 0.2 L3.30 1.4 L5.50 0.2 L7.70 1.4 L9.90 0.2 L12.10 1.4 L14.30 0.2 L16.50 1.4 L18.70 0.2 L20.90 1.4 L23.10 0.2" fill="none" stroke="#e0604a" stroke-width="0.8"/></svg>
<svg style="position:absolute;left:417.38px;top:226.70px;" width="9.53" height="2" viewBox="0 0 9.53 2"><path d="M0 1.4 L1.10 0.2 L3.30 1.4 L5.50 0.2 L7.70 1.4 L9.90 0.2" fill="none" stroke="#e0604a" stroke-width="0.8"/></svg>
<div style="left:275.33px;top:84.74px;width:1.00px;height:1.00px;background:#9a9a9a;"></div>
<div style="left:277.23px;top:84.74px;width:1.00px;height:1.00px;background:#9a9a9a;"></div>
<div style="left:279.13px;top:84.74px;width:1.00px;height:1.00px;background:#9a9a9a;"></div>
<div style="left:426.71px;top:216.80px;width:1.00px;height:10.60px;background:#aeafad;"></div>
<svg style="position:absolute;left:220.00px;top:215.50px;" width="9" height="12" viewBox="0 0 9 12"><circle cx="4.3" cy="4.5" r="2.75" fill="#262626" stroke="#cfc23a" stroke-width="1.35"/><path d="M3.3 3.8 H5.3 L4.3 5.6Z" fill="#8a8228"/><path d="M3.1 7.4 L5.5 7.4 L5.2 11.2 L3.4 11.2Z" fill="#b5b5b5"/></svg>
<div style="left:759.20px;top:38.00px;width:8.80px;height:189.00px;background:#424242;"></div>
<div style="left:758.70px;top:227.00px;width:0.70px;height:149.00px;background:#2c2c2c;"></div>
<div style="left:765.00px;top:125.40px;width:3.00px;height:6.40px;background:#b5554a;"></div>
<div style="left:765.00px;top:139.20px;width:3.00px;height:6.40px;background:#b5554a;"></div>
<div style="left:759.20px;top:138.30px;width:8.80px;height:1.00px;background:#a0a0a0;"></div>
<div style="left:320.25px;top:227.90px;width:217.30px;height:142.70px;background:#252526;box-sizing:border-box;border:1px solid #3e3e3e"></div>
<div style="left:321.25px;top:240.78px;width:215.80px;height:12.28px;background:#062f4a;"></div>
<svg style="position:absolute;left:324.80px;top:229.40px;" width="9.2" height="10" viewBox="0 0 9.2 10"><path d="M4.6 0.7 L8.4 2.8 L8.4 7.2 L4.6 9.3 L0.8 7.2 L0.8 2.8 Z M0.8 2.8 L4.6 4.9 L8.4 2.8 M4.6 4.9 L4.6 9.3" fill="none" stroke="#a87cc9" stroke-width="1.05" stroke-linejoin="round"/></svg>
<div style="left:336.8px;top:230.46px;line-height:11.88px;font-family:'Liberation Mono', monospace;font-size:8.5px;letter-spacing:-0.335px;-webkit-text-stroke:0.05px currentColor;color:#d4d4d4;white-space:pre"><span style="color:#20a6ff;-webkit-text-stroke:0.3px #20a6ff">n</span><span style="color:#20a6ff;-webkit-text-stroke:0.3px #20a6ff">o</span>rmalizeUnits</div>
<svg style="position:absolute;left:324.80px;top:241.26px;" width="9.2" height="10" viewBox="0 0 9.2 10"><path d="M4.6 0.7 L8.4 2.8 L8.4 7.2 L4.6 9.3 L0.8 7.2 L0.8 2.8 Z M0.8 2.8 L4.6 4.9 L8.4 2.8 M4.6 4.9 L4.6 9.3" fill="none" stroke="#a87cc9" stroke-width="1.05" stroke-linejoin="round"/></svg>
<div style="left:336.8px;top:242.32px;line-height:11.88px;font-family:'Liberation Mono', monospace;font-size:8.5px;letter-spacing:-0.335px;-webkit-text-stroke:0.05px currentColor;color:#d4d4d4;white-space:pre"><span style="color:#20a6ff;-webkit-text-stroke:0.3px #20a6ff">n</span><span style="color:#20a6ff;-webkit-text-stroke:0.3px #20a6ff">o</span>w</div>
<svg style="position:absolute;left:324.80px;top:253.12px;" width="9.2" height="10" viewBox="0 0 9.2 10"><path d="M4.6 0.7 L8.4 2.8 L8.4 7.2 L4.6 9.3 L0.8 7.2 L0.8 2.8 Z M0.8 2.8 L4.6 4.9 L8.4 2.8 M4.6 4.9 L4.6 9.3" fill="none" stroke="#a87cc9" stroke-width="1.05" stroke-linejoin="round"/></svg>
<div style="left:336.8px;top:254.18px;line-height:11.88px;font-family:'Liberation Mono', monospace;font-size:8.5px;letter-spacing:-0.335px;-webkit-text-stroke:0.05px currentColor;color:#d4d4d4;white-space:pre">mo<span style="color:#20a6ff;-webkit-text-stroke:0.3px #20a6ff">n</span>ths</div>
<svg style="position:absolute;left:324.80px;top:264.98px;" width="9.2" height="10" viewBox="0 0 9.2 10"><path d="M4.6 0.7 L8.4 2.8 L8.4 7.2 L4.6 9.3 L0.8 7.2 L0.8 2.8 Z M0.8 2.8 L4.6 4.9 L8.4 2.8 M4.6 4.9 L4.6 9.3" fill="none" stroke="#a87cc9" stroke-width="1.05" stroke-linejoin="round"/></svg>
<div style="left:336.8px;top:266.04px;line-height:11.88px;font-family:'Liberation Mono', monospace;font-size:8.5px;letter-spacing:-0.335px;-webkit-text-stroke:0.05px currentColor;color:#d4d4d4;white-space:pre">mo<span style="color:#20a6ff;-webkit-text-stroke:0.3px #20a6ff">n</span>thsS<span style="color:#20a6ff;-webkit-text-stroke:0.3px #20a6ff">h</span>ort</div>
<svg style="position:absolute;left:323.80px;top:278.34px;" width="10" height="7" viewBox="0 0 10 7"><path d="M1.6 0.8 H0.6 V6.2 H1.6 M8.4 0.8 H9.4 V6.2 H8.4" fill="none" stroke="#b8b8b8" stroke-width="0.8"/><path d="M2.3 3.2 L5.5 1.5 L8 2.6 L8 5.2 L5 6 L2.3 4.8 Z" fill="#75beff"/></svg>
<div style="left:336.8px;top:277.90px;line-height:11.88px;font-family:'Liberation Mono', monospace;font-size:8.5px;letter-spacing:-0.335px;-webkit-text-stroke:0.05px currentColor;color:#d4d4d4;white-space:pre">versio<span style="color:#20a6ff;-webkit-text-stroke:0.3px #20a6ff">n</span></div>
<svg style="position:absolute;left:324.80px;top:288.70px;" width="9.2" height="10" viewBox="0 0 9.2 10"><path d="M4.6 0.7 L8.4 2.8 L8.4 7.2 L4.6 9.3 L0.8 7.2 L0.8 2.8 Z M0.8 2.8 L4.6 4.9 L8.4 2.8 M4.6 4.9 L4.6 9.3" fill="none" stroke="#a87cc9" stroke-width="1.05" stroke-linejoin="round"/></svg>
<div style="left:336.8px;top:289.76px;line-height:11.88px;font-family:'Liberation Mono', monospace;font-size:8.5px;letter-spacing:-0.335px;-webkit-text-stroke:0.05px currentColor;color:#d4d4d4;white-space:pre">duratio<span style="color:#20a6ff;-webkit-text-stroke:0.3px #20a6ff">n</span></div>
<svg style="position:absolute;left:324.80px;top:300.56px;" width="9.2" height="10" viewBox="0 0 9.2 10"><path d="M4.6 0.7 L8.4 2.8 L8.4 7.2 L4.6 9.3 L0.8 7.2 L0.8 2.8 Z M0.8 2.8 L4.6 4.9 L8.4 2.8 M4.6 4.9 L4.6 9.3" fill="none" stroke="#a87cc9" stroke-width="1.05" stroke-linejoin="round"/></svg>
<div style="left:336.8px;top:301.62px;line-height:11.88px;font-family:'Liberation Mono', monospace;font-size:8.5px;letter-spacing:-0.335px;-webkit-text-stroke:0.05px currentColor;color:#d4d4d4;white-space:pre">parseZo<span style="color:#20a6ff;-webkit-text-stroke:0.3px #20a6ff">n</span>e</div>
<svg style="position:absolute;left:324.80px;top:312.42px;" width="9.2" height="10" viewBox="0 0 9.2 10"><path d="M4.6 0.7 L8.4 2.8 L8.4 7.2 L4.6 9.3 L0.8 7.2 L0.8 2.8 Z M0.8 2.8 L4.6 4.9 L8.4 2.8 M4.6 4.9 L4.6 9.3" fill="none" stroke="#a87cc9" stroke-width="1.05" stroke-linejoin="round"/></svg>
<div style="left:336.8px;top:313.48px;line-height:11.88px;font-family:'Liberation Mono', monospace;font-size:8.5px;letter-spacing:-0.335px;-webkit-text-stroke:0.05px currentColor;color:#d4d4d4;white-space:pre">defi<span style="color:#20a6ff;-webkit-text-stroke:0.3px #20a6ff">n</span>e<span style="color:#20a6ff;-webkit-text-stroke:0.3px #20a6ff">L</span>ocale</div>
<svg style="position:absolute;left:324.80px;top:324.28px;" width="9.2" height="10" viewBox="0 0 9.2 10"><path d="M4.6 0.7 L8.4 2.8 L8.4 7.2 L4.6 9.3 L0.8 7.2 L0.8 2.8 Z M0.8 2.8 L4.6 4.9 L8.4 2.8 M4.6 4.9 L4.6 9.3" fill="none" stroke="#a87cc9" stroke-width="1.05" stroke-linejoin="round"/></svg>
<div style="left:336.8px;top:325.34px;line-height:11.88px;font-family:'Liberation Mono', monospace;font-size:8.5px;letter-spacing:-0.335px;-webkit-text-stroke:0.05px currentColor;color:#d4d4d4;white-space:pre">isDuratio<span style="color:#20a6ff;-webkit-text-stroke:0.3px #20a6ff">n</span></div>
<svg style="position:absolute;left:324.80px;top:336.14px;" width="9.2" height="10" viewBox="0 0 9.2 10"><path d="M4.6 0.7 L8.4 2.8 L8.4 7.2 L4.6 9.3 L0.8 7.2 L0.8 2.8 Z M0.8 2.8 L4.6 4.9 L8.4 2.8 M4.6 4.9 L4.6 9.3" fill="none" stroke="#a87cc9" stroke-width="1.05" stroke-linejoin="round"/></svg>
<div style="left:336.8px;top:337.20px;line-height:11.88px;font-family:'Liberation Mono', monospace;font-size:8.5px;letter-spacing:-0.335px;-webkit-text-stroke:0.05px currentColor;color:#d4d4d4;white-space:pre">cale<span style="color:#20a6ff;-webkit-text-stroke:0.3px #20a6ff">n</span>darF<span style="color:#20a6ff;-webkit-text-stroke:0.3px #20a6ff">o</span>rmat</div>
<svg style="position:absolute;left:324.80px;top:348.00px;" width="9.2" height="10" viewBox="0 0 9.2 10"><path d="M4.6 0.7 L8.4 2.8 L8.4 7.2 L4.6 9.3 L0.8 7.2 L0.8 2.8 Z M0.8 2.8 L4.6 4.9 L8.4 2.8 M4.6 4.9 L4.6 9.3" fill="none" stroke="#a87cc9" stroke-width="1.05" stroke-linejoin="round"/></svg>
<div style="left:336.8px;top:349.06px;line-height:11.88px;font-family:'Liberation Mono', monospace;font-size:8.5px;letter-spacing:-0.335px;-webkit-text-stroke:0.05px currentColor;color:#d4d4d4;white-space:pre">isMome<span style="color:#20a6ff;-webkit-text-stroke:0.3px #20a6ff">n</span>t</div>
<svg style="position:absolute;left:324.80px;top:359.86px;" width="9.2" height="10" viewBox="0 0 9.2 10"><path d="M4.6 0.7 L8.4 2.8 L8.4 7.2 L4.6 9.3 L0.8 7.2 L0.8 2.8 Z M0.8 2.8 L4.6 4.9 L8.4 2.8 M4.6 4.9 L4.6 9.3" fill="none" stroke="#a87cc9" stroke-width="1.05" stroke-linejoin="round"/></svg>
<div style="left:336.8px;top:360.92px;line-height:11.88px;font-family:'Liberation Mono', monospace;font-size:8.5px;letter-spacing:-0.335px;-webkit-text-stroke:0.05px currentColor;color:#d4d4d4;white-space:pre">toStri<span style="color:#20a6ff;-webkit-text-stroke:0.3px #20a6ff">n</span>g</div>
<div style="left:537.20px;top:227.90px;width:218.50px;height:41.20px;background:#252526;box-sizing:border-box;border:1px solid #3e3e3e"></div>
<div style="left:542.2px;top:231.60px;line-height:12px;font-family:'Liberation Mono', monospace;font-size:8.5px;letter-spacing:-0.335px;-webkit-text-stroke:0.05px currentColor;color:#ababab;white-space:pre">function moment.now(): number</div>
<div style="left:542.00px;top:254.16px;line-height:12.08px;font-family:'Liberation Sans', sans-serif;font-size:8.05px;color:#d4d4d4;font-weight:400;">Returns unix time in milliseconds. Overwrite for profit.</div>
<svg style="position:absolute;left:741.50px;top:230.80px;" width="8" height="8" viewBox="0 0 8 8"><path d="M1.5 1.5 L6 6 M6 1.5 L1.5 6" stroke="#d0d0d0" stroke-width="1.1"/></svg>
<div style="left:173.20px;top:375.60px;width:594.80px;height:1.10px;background:#383838;"></div>
<div style="left:186.80px;top:382.23px;line-height:11.55px;font-family:'Liberation Sans', sans-serif;font-size:7.7px;color:#e7e7e7;font-weight:400;transform:scaleX(0.877);transform-origin:0 0">PROBLEMS</div>
<div style="left:186.80px;top:396.90px;width:37.50px;height:0.90px;background:#a8a8a8;"></div>
<svg style="position:absolute;left:229.80px;top:382.00px;" width="12" height="12" viewBox="0 0 12 12"><circle cx="6" cy="6" r="5.7" fill="#4d4d4d"/><text x="6" y="8.6" text-anchor="middle" font-family="Liberation Sans" font-size="7.6" fill="#e0e0e0">2</text></svg>
<div style="left:254.75px;top:382.23px;line-height:11.55px;font-family:'Liberation Sans', sans-serif;font-size:7.7px;color:#8f8f8f;font-weight:400;transform:scaleX(0.877);transform-origin:0 0">OUTPUT</div>
<div style="left:297.25px;top:382.23px;line-height:11.55px;font-family:'Liberation Sans', sans-serif;font-size:7.7px;color:#8f8f8f;font-weight:400;transform:scaleX(0.877);transform-origin:0 0">DEBUG CONSOLE</div>
<div style="left:370.40px;top:382.23px;line-height:11.55px;font-family:'Liberation Sans', sans-serif;font-size:7.7px;color:#8f8f8f;font-weight:400;transform:scaleX(0.877);transform-origin:0 0">TERMINAL</div>
<div style="left:557.40px;top:380.00px;width:141.20px;height:16.00px;background:#3c3c3c;"></div>
<div style="left:560.50px;top:382.51px;line-height:11.77px;font-family:'Liberation Sans', sans-serif;font-size:7.85px;color:#9a9a9a;font-weight:400;">Filter. Eg: text, **/*.ts, !**/node_m...</div>
<svg style="position:absolute;left:683.50px;top:381.50px;" width="13" height="13" viewBox="0 0 13 13"><path d="M10.78 4.93 L10.78 7.07 L9.31 7.13 L9.14 7.54 L10.14 8.63 L8.63 10.14 L7.54 9.14 L7.13 9.31 L7.07 10.78 L4.93 10.78 L4.87 9.31 L4.46 9.14 L3.37 10.14 L1.86 8.63 L2.86 7.54 L2.69 7.13 L1.22 7.07 L1.22 4.93 L2.69 4.87 L2.86 4.46 L1.86 3.37 L3.37 1.86 L4.46 2.86 L4.87 2.69 L4.93 1.22 L7.07 1.22 L7.13 2.69 L7.54 2.86 L8.63 1.86 L10.14 3.37 L9.14 4.46 L9.31 4.87Z" fill="#c5c5c5"/><circle cx="6" cy="6" r="1.5" fill="#3c3c3c"/><circle cx="8.6" cy="8.8" r="2.6" fill="#c5c5c5" stroke="#3c3c3c" stroke-width="1"/><path d="M7.3 8.8 H9.9" stroke="#3c3c3c" stroke-width="0.8"/></svg>
<svg style="position:absolute;left:709.00px;top:382.00px;" width="12" height="12" viewBox="0 0 12 12"><path d="M3.6 2.8 V1.4 H10.2 V8 H8.6" fill="#9a9a9a" stroke="#c5c5c5" stroke-width="1.3"/><rect x="1.6" y="3.6" width="6.6" height="6.6" fill="#1e1e1e" stroke="#c5c5c5" stroke-width="1.6"/></svg>
<svg style="position:absolute;left:730.00px;top:383.00px;" width="12" height="10" viewBox="0 0 12 10"><path d="M1.5 7.5 L6 3 L10.5 7.5" fill="none" stroke="#c5c5c5" stroke-width="1.4"/></svg>
<svg style="position:absolute;left:752.00px;top:383.00px;" width="10" height="10" viewBox="0 0 10 10"><path d="M1.6 2.2 L7.6 8.2 M7.6 2.2 L1.6 8.2" stroke="#c5c5c5" stroke-width="1.6"/></svg>
<svg style="position:absolute;left:185.80px;top:403.80px;" width="6" height="6" viewBox="0 0 6 6"><path d="M5 0.6 L5 5 L0.6 5 Z" fill="#c5c5c5"/></svg>
<svg style="position:absolute;left:198.00px;top:402.80px;" width="9" height="8" viewBox="0 0 9 8"><text x="0.3" y="6.45" font-family="Liberation Sans" font-weight="700" font-style="italic" font-size="6.9" textLength="7.2" lengthAdjust="spacingAndGlyphs" fill="#c4c43e" stroke="#c4c43e" stroke-width="0.25">JS</text></svg>
<div style="left:210.40px;top:400.15px;line-height:12.90px;font-family:'Liberation Sans', sans-serif;font-size:8.6px;color:#cccccc;font-weight:400;">api.js</div>
<div style="left:233.90px;top:400.68px;line-height:11.85px;font-family:'Liberation Sans', sans-serif;font-size:7.9px;color:#8d8d8d;font-weight:400;">web/src</div>
<svg style="position:absolute;left:268.00px;top:400.80px;" width="12" height="12" viewBox="0 0 12 12"><circle cx="6" cy="6" r="5.7" fill="#4d4d4d"/><text x="6" y="8.6" text-anchor="middle" font-family="Liberation Sans" font-size="7.6" fill="#e0e0e0">2</text></svg>
<svg style="position:absolute;left:194.40px;top:418.00px;" width="6" height="6" viewBox="0 0 6 6"><path d="M5 0.6 L5 5 L0.6 5 Z" fill="#c5c5c5"/></svg>
<svg style="position:absolute;left:204.50px;top:416.60px;" width="9" height="9" viewBox="0 0 9 9"><circle cx="4.2" cy="4.2" r="3.9" fill="#e16c58"/><path d="M2.6 2.6 L5.8 5.8 M5.8 2.6 L2.6 5.8" stroke="#1e1e1e" stroke-width="1"/></svg>
<div style="left:218.70px;top:414.37px;line-height:12.86px;font-family:'Liberation Sans', sans-serif;font-size:8.57px;color:#cccccc;font-weight:400;">Property &#x27;jsonX&#x27; does not exist on type &#x27;Response&#x27;. Did you mean &#x27;json&#x27;?</div>
<div style="left:496.00px;top:414.69px;line-height:12.23px;font-family:'Liberation Sans', sans-serif;font-size:8.15px;color:#979797;font-weight:400;">ts(2551)</div>
<div style="left:532.20px;top:414.57px;line-height:12.45px;font-family:'Liberation Sans', sans-serif;font-size:8.3px;color:#979797;font-weight:400;">[13, 33]</div>
<div style="left:211.80px;top:428.89px;line-height:13.02px;font-family:'Liberation Sans', sans-serif;font-size:8.68px;color:#8d8d8d;font-weight:400;">lib.dom.d.ts[2230, 5]: &#x27;json&#x27; is declared here.</div>
<div style="left:762.00px;top:399.00px;width:6.00px;height:37.30px;background:#464646;"></div>
<svg style="position:absolute;left:7.50px;top:447.50px;" width="9" height="12" viewBox="0 0 9 12"><circle cx="2.2" cy="2" r="1.3" fill="none" stroke="#fff" stroke-width="0.9"/><circle cx="6.8" cy="2.6" r="1.3" fill="none" stroke="#fff" stroke-width="0.9"/><circle cx="2.2" cy="10" r="1.3" fill="none" stroke="#fff" stroke-width="0.9"/><path d="M2.2 3.3 V8.7 M6.8 3.9 C6.8 6.5 2.2 6 2.2 8.7" fill="none" stroke="#fff" stroke-width="1"/></svg>
<div style="left:17.30px;top:448.47px;line-height:11.85px;font-family:'Liberation Sans', sans-serif;font-size:7.9px;color:#ffffff;font-weight:400;">master*</div>
<svg style="position:absolute;left:52.50px;top:449.80px;" width="9" height="9" viewBox="0 0 9 9"><circle cx="4.2" cy="4.2" r="3.7" fill="#fff"/><path d="M2.7 2.7 L5.7 5.7 M5.7 2.7 L2.7 5.7" stroke="#137acb" stroke-width="1.1"/></svg>
<div style="left:63.50px;top:448.47px;line-height:11.85px;font-family:'Liberation Sans', sans-serif;font-size:7.9px;color:#ffffff;font-weight:400;">2</div>
<svg style="position:absolute;left:70.50px;top:449.30px;" width="9" height="9" viewBox="0 0 9 9"><path d="M4.2 0.6 L8 7.6 H0.4 Z" fill="#fff"/><rect x="3.75" y="3" width="0.9" height="2.6" fill="#137acb"/><rect x="3.75" y="6.1" width="0.9" height="0.9" fill="#137acb"/></svg>
<div style="left:81.25px;top:448.47px;line-height:11.85px;font-family:'Liberation Sans', sans-serif;font-size:7.9px;color:#ffffff;font-weight:400;">0</div>
<svg style="position:absolute;left:93.80px;top:449.30px;" width="9" height="9" viewBox="0 0 9 9"><path d="M3.5 1 H0.8 V7.6 H7.4 V5" fill="none" stroke="#fff" stroke-width="1"/><path d="M4 4.3 L7.6 0.8 M4.8 0.8 H7.6 V3.6" fill="none" stroke="#fff" stroke-width="1"/></svg>
<div style="left:102.70px;top:448.61px;line-height:11.58px;font-family:'Liberation Sans', sans-serif;font-size:7.72px;color:#ffffff;font-weight:400;">Live Share</div>
<div style="left:487.30px;top:448.59px;line-height:11.62px;font-family:'Liberation Sans', sans-serif;font-size:7.75px;color:#ffffff;font-weight:400;">Ln 15, Col 45</div>
<div style="left:543.40px;top:448.59px;line-height:11.62px;font-family:'Liberation Sans', sans-serif;font-size:7.75px;color:#ffffff;font-weight:400;">Spaces: 4</div>
<div style="left:588.30px;top:448.59px;line-height:11.62px;font-family:'Liberation Sans', sans-serif;font-size:7.75px;color:#ffffff;font-weight:400;">UTF-8</div>
<div style="left:621.60px;top:448.59px;line-height:11.62px;font-family:'Liberation Sans', sans-serif;font-size:7.75px;color:#ffffff;font-weight:400;">LF</div>
<div style="left:640.40px;top:448.47px;line-height:11.85px;font-family:'Liberation Sans', sans-serif;font-size:7.9px;color:#ffffff;font-weight:400;">JavaScript</div>
<svg style="position:absolute;left:686.50px;top:449.50px;" width="11" height="9" viewBox="0 0 11 9"><path d="M0.6 4.2 C2.5 1 8 1 10 4.2 C8 7.4 2.5 7.4 0.6 4.2Z" fill="none" stroke="#fff" stroke-width="1"/><circle cx="5.3" cy="4.2" r="1.8" fill="#fff"/></svg>
<div style="left:699.40px;top:448.59px;line-height:11.62px;font-family:'Liberation Sans', sans-serif;font-size:7.75px;color:#ffffff;font-weight:400;">[off]</div>
<svg style="position:absolute;left:724.00px;top:449.00px;" width="10" height="10" viewBox="0 0 10 10"><circle cx="4.8" cy="4.8" r="4.3" fill="#fff"/><circle cx="3.3" cy="3.6" r="0.7" fill="#137acb"/><circle cx="6.3" cy="3.6" r="0.7" fill="#137acb"/><path d="M2.6 5.6 C3.5 7.4 6.1 7.4 7 5.6" fill="none" stroke="#137acb" stroke-width="0.9"/></svg>
<svg style="position:absolute;left:744.20px;top:448.80px;" width="9" height="10" viewBox="0 0 9 10"><path d="M4.2 0.8 C2 0.8 1.5 2.6 1.5 4.5 L0.6 7.2 H7.8 L6.9 4.5 C6.9 2.6 6.4 0.8 4.2 0.8Z" fill="#fff"/><circle cx="4.2" cy="8.2" r="1" fill="#fff"/></svg>
<div style="left:754.70px;top:448.59px;line-height:11.62px;font-family:'Liberation Sans', sans-serif;font-size:7.75px;color:#ffffff;font-weight:400;">1</div>
</div></body></html>
